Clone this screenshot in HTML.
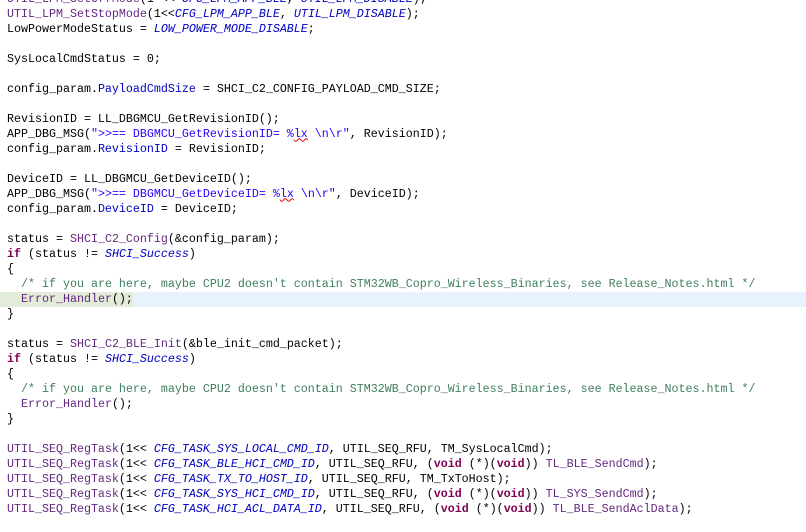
<!DOCTYPE html>
<html><head><meta charset="utf-8"><style>
html,body{margin:0;padding:0;background:#fff;width:806px;height:532px;overflow:hidden}
pre{margin:0;position:absolute;left:7px;top:-8.5px;font-family:"Liberation Mono",monospace;font-size:11.67px;line-height:15px;color:#000}
.f{color:#642880}
.k{color:#7f0055;font-weight:bold}
.m{color:#0000c0;font-style:italic}
.d{color:#0000c0}
.s{color:#2a00ff}
.c{color:#3f7f5f}
.sq{text-decoration:underline wavy #e00000;text-decoration-thickness:1px}
#hl{position:absolute;left:0;top:291.5px;width:806px;height:15px;background:#e8f2fe}
#hlg{position:absolute;left:0;top:291.5px;width:133px;height:15px;background:#e2ecd8}
</style></head><body>
<div id="hl"></div><div id="hlg"></div>
<pre><span class="f">UTIL_LPM_SetOffMode</span>(1 &lt;&lt; <span class="m">CFG_LPM_APP_BLE</span>, <span class="m">UTIL_LPM_DISABLE</span>);
<span class="f">UTIL_LPM_SetStopMode</span>(1&lt;&lt;<span class="m">CFG_LPM_APP_BLE</span>, <span class="m">UTIL_LPM_DISABLE</span>);
LowPowerModeStatus = <span class="m">LOW_POWER_MODE_DISABLE</span>;

SysLocalCmdStatus = 0;

config_param.<span class="d">PayloadCmdSize</span> = SHCI_C2_CONFIG_PAYLOAD_CMD_SIZE;

RevisionID = LL_DBGMCU_GetRevisionID();
APP_DBG_MSG(<span class="s">"&gt;&gt;== DBGMCU_GetRevisionID= %<span class="sq">lx</span> \n\r"</span>, RevisionID);
config_param.<span class="d">RevisionID</span> = RevisionID;

DeviceID = LL_DBGMCU_GetDeviceID();
APP_DBG_MSG(<span class="s">"&gt;&gt;== DBGMCU_GetDeviceID= %<span class="sq">lx</span> \n\r"</span>, DeviceID);
config_param.<span class="d">DeviceID</span> = DeviceID;

status = <span class="f">SHCI_C2_Config</span>(&amp;config_param);
<span class="k">if</span> (status != <span class="m">SHCI_Success</span>)
{
  <span class="c">/* if you are here, maybe CPU2 doesn't contain STM32WB_Copro_Wireless_Binaries, see Release_Notes.html */</span>
  <span class="f">Error_Handler</span>();
}

status = <span class="f">SHCI_C2_BLE_Init</span>(&amp;ble_init_cmd_packet);
<span class="k">if</span> (status != <span class="m">SHCI_Success</span>)
{
  <span class="c">/* if you are here, maybe CPU2 doesn't contain STM32WB_Copro_Wireless_Binaries, see Release_Notes.html */</span>
  <span class="f">Error_Handler</span>();
}

<span class="f">UTIL_SEQ_RegTask</span>(1&lt;&lt; <span class="m">CFG_TASK_SYS_LOCAL_CMD_ID</span>, UTIL_SEQ_RFU, TM_SysLocalCmd);
<span class="f">UTIL_SEQ_RegTask</span>(1&lt;&lt; <span class="m">CFG_TASK_BLE_HCI_CMD_ID</span>, UTIL_SEQ_RFU, (<span class="k">void</span> (*)(<span class="k">void</span>)) <span class="f">TL_BLE_SendCmd</span>);
<span class="f">UTIL_SEQ_RegTask</span>(1&lt;&lt; <span class="m">CFG_TASK_TX_TO_HOST_ID</span>, UTIL_SEQ_RFU, TM_TxToHost);
<span class="f">UTIL_SEQ_RegTask</span>(1&lt;&lt; <span class="m">CFG_TASK_SYS_HCI_CMD_ID</span>, UTIL_SEQ_RFU, (<span class="k">void</span> (*)(<span class="k">void</span>)) <span class="f">TL_SYS_SendCmd</span>);
<span class="f">UTIL_SEQ_RegTask</span>(1&lt;&lt; <span class="m">CFG_TASK_HCI_ACL_DATA_ID</span>, UTIL_SEQ_RFU, (<span class="k">void</span> (*)(<span class="k">void</span>)) <span class="f">TL_BLE_SendAclData</span>);
</pre>
</body></html>
